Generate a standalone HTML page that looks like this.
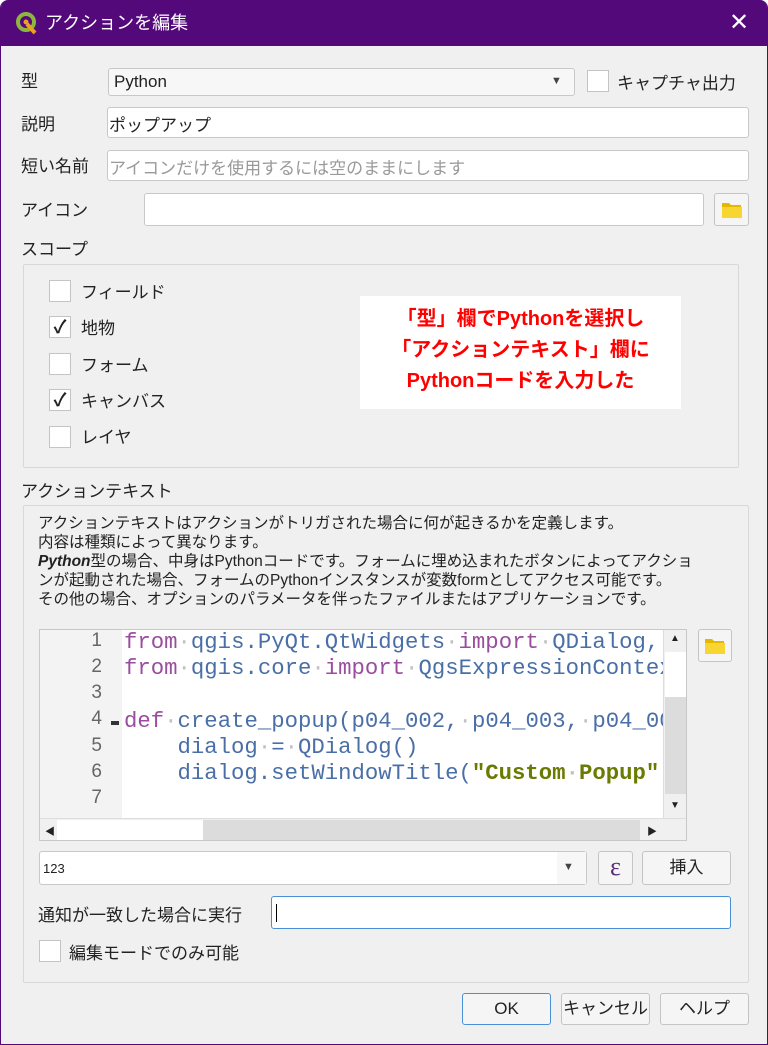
<!DOCTYPE html>
<html><head><meta charset="utf-8"><style>
*{box-sizing:border-box;margin:0;padding:0}
body{width:768px;height:1045px;background:#fff;font-family:"Liberation Sans","Noto Sans CJK JP",sans-serif;font-size:16px;color:#222;position:relative;overflow:hidden}
.win{position:absolute;left:0;top:0;width:768px;height:1045px;background:#f0f0f0;border:1px solid #54097a;border-top:none;border-radius:8px 8px 0 0;overflow:hidden}
.title{position:absolute;left:0;top:0;width:768px;height:46px;background:#54097a;color:#fff}
.a{position:absolute;white-space:nowrap}
.inp{position:absolute;background:#fff;border:1px solid #c8c8c8;border-radius:3px}
.btn{position:absolute;background:#f5f5f5;border:1px solid #c4c4c4;border-radius:3px;text-align:center}
.cb{position:absolute;width:22px;height:22px;background:#fff;border:1px solid #c4c4c4}
.grp{position:absolute;border:1px solid #d8d8d8;border-radius:2px}
.code{font-family:"Liberation Mono","DejaVu Sans Mono",monospace;font-size:22.3px;color:#4a6fa6}
.k{color:#9a4d9e}.s{color:#6b7a00;font-weight:bold}.d{color:#c0c0c0}
.ln{position:absolute;left:0;width:62px;text-align:right;color:#666;font-family:"Liberation Sans",sans-serif;font-size:19px}
</style></head><body><div class="win">
<div class="title">
<svg class="a" style="left:14px;top:11px" width="24" height="24" viewBox="0 0 24 24"><circle cx="11" cy="11" r="8" fill="none" stroke="#8db63e" stroke-width="4"/><path d="M12 13 L20 22" stroke="#e8a21c" stroke-width="4"/><circle cx="11" cy="11" r="2.5" fill="#e8a21c"/></svg>
<div class="a" style="left:44px;top:9px;font-size:18px">アクションを編集</div>
<div class="a" style="left:728px;top:8px;font-size:24px;font-weight:300">✕</div>
</div>

<div class="a" style="left:20px;top:67px;font-size:17px">型</div>
<div class="inp" style="left:107px;top:68px;width:467px;height:28px;background:#f7f7f7"><span class="a" style="left:5px;top:3px;font-size:17px">Python</span><span class="a" style="left:442px;top:6px;font-size:11px;color:#444">▼</span></div>
<div class="cb" style="left:586px;top:70px"></div>
<div class="a" style="left:616px;top:69px;font-size:17px">キャプチャ出力</div>

<div class="a" style="left:20px;top:110px;font-size:17px">説明</div>
<div class="inp" style="left:106px;top:107px;width:642px;height:31px"><span class="a" style="left:1px;top:3px;font-size:17px">ポップアップ</span></div>
<div class="a" style="left:20px;top:152px;font-size:17px">短い名前</div>
<div class="inp" style="left:106px;top:150px;width:642px;height:31px"><span class="a" style="left:1px;top:3px;color:#999;font-size:17px">アイコンだけを使用するには空のままにします</span></div>
<div class="a" style="left:20px;top:196px;font-size:17px">アイコン</div>
<div class="inp" style="left:143px;top:193px;width:560px;height:33px"></div>
<div class="btn" style="left:713px;top:193px;width:35px;height:33px"><svg style="margin-top:7px" width="22" height="18" viewBox="0 0 22 18"><path d="M1 2h7l2 2h10v13H1z" fill="#e5b800"/><path d="M1 6h20v11H1z" fill="#f8d531"/></svg></div>

<div class="a" style="left:20px;top:235px;font-size:17px">スコープ</div>
<div class="grp" style="left:22px;top:264px;width:716px;height:204px"></div>
<div class="cb" style="left:48px;top:280px"></div><div class="a" style="left:80px;top:278px;font-size:17px">フィールド</div>
<div class="cb" style="left:48px;top:316px;font-size:18px;font-weight:bold;text-align:center;line-height:20px">✓</div><div class="a" style="left:80px;top:314px;font-size:17px">地物</div>
<div class="cb" style="left:48px;top:353px"></div><div class="a" style="left:80px;top:351px;font-size:17px">フォーム</div>
<div class="cb" style="left:48px;top:389px;font-size:18px;font-weight:bold;text-align:center;line-height:20px">✓</div><div class="a" style="left:80px;top:387px;font-size:17px">キャンバス</div>
<div class="cb" style="left:48px;top:426px"></div><div class="a" style="left:80px;top:423px;font-size:17px">レイヤ</div>
<div class="a" style="left:359px;top:296px;width:321px;height:113px;background:#fff;color:#f00;font-weight:bold;font-size:20px;text-align:center;line-height:31px;padding-top:8px">「型」欄でPythonを選択し<br>「アクションテキスト」欄に<br>Pythonコードを入力した</div>

<div class="a" style="left:20px;top:477px;font-size:17px">アクションテキスト</div>
<div class="grp" style="left:22px;top:505px;width:726px;height:478px"></div>
<div class="a" style="left:37px;top:514px;font-size:15.5px;line-height:19px">アクションテキストはアクションがトリガされた場合に何が起きるかを定義します。<br>内容は種類によって異なります。<br><i><b>Python</b></i>型の場合、中身はPythonコードです。フォームに埋め込まれたボタンによってアクショ<br>ンが起動された場合、フォームのPythonインスタンスが変数formとしてアクセス可能です。<br>その他の場合、オプションのパラメータを伴ったファイルまたはアプリケーションです。</div>

<div class="a" style="left:38px;top:629px;width:648px;height:212px;border:1px solid #c8c8c8;background:#fff;overflow:hidden">
<div class="a" style="left:0;top:0;width:82px;height:188px;background:#f3f3f3"></div>
<div class="ln" style="top:0">1</div><div class="ln" style="top:26px">2</div><div class="ln" style="top:52px">3</div><div class="ln" style="top:78px">4</div><div class="ln" style="top:105px">5</div><div class="ln" style="top:131px">6</div><div class="ln" style="top:157px">7</div>
<div class="a" style="left:71px;top:91px;width:8px;height:4px;background:#333"></div>
<div class="a code" style="left:84px;top:-1px;line-height:26.3px;width:540px;overflow:hidden">
<span class="k">from</span><span class="d">·</span>qgis.PyQt.QtWidgets<span class="d">·</span><span class="k">import</span><span class="d">·</span>QDialog,<br>
<span class="k">from</span><span class="d">·</span>qgis.core<span class="d">·</span><span class="k">import</span><span class="d">·</span>QgsExpressionContext<br><br>
<span class="k">def</span><span class="d">·</span>create_popup(p04_002,<span class="d">·</span>p04_003,<span class="d">·</span>p04_004<br>
&nbsp;&nbsp;&nbsp;&nbsp;dialog<span class="d">·</span>=<span class="d">·</span>QDialog()<br>
&nbsp;&nbsp;&nbsp;&nbsp;dialog.setWindowTitle(<span class="s">"Custom<span class="d">·</span>Popup"</span>)</div>
<div class="a" style="left:623px;top:0;width:24px;height:188px;background:#f0f0f0;border-left:1px solid #ddd"><div class="a" style="left:1px;top:22px;width:21px;height:45px;background:#fff"></div><div class="a" style="left:1px;top:67px;width:21px;height:97px;background:#dcdcdc"></div><span class="a" style="left:6px;top:3px;font-size:10px">▲</span><span class="a" style="left:6px;top:170px;font-size:10px">▼</span></div>
<div class="a" style="left:0;top:188px;width:647px;height:23px;background:#f0f0f0;border-top:1px solid #ddd"><div class="a" style="left:17px;top:1px;width:146px;height:21px;background:#fff"></div><div class="a" style="left:163px;top:1px;width:437px;height:21px;background:#dcdcdc"></div><span class="a" style="left:5px;top:4px;font-size:10px">◀</span><span class="a" style="left:607px;top:4px;font-size:10px">▶</span></div>
</div>
<div class="btn" style="left:697px;top:629px;width:34px;height:33px"><svg style="margin-top:7px" width="22" height="18" viewBox="0 0 22 18"><path d="M1 2h7l2 2h10v13H1z" fill="#e5b800"/><path d="M1 6h20v11H1z" fill="#f8d531"/></svg></div>

<div class="inp" style="left:38px;top:851px;width:548px;height:34px"><span class="a" style="left:3px;top:9px;font-size:13px">123</span><div class="a" style="left:517px;top:0;width:29px;height:32px;background:#f7f7f7"></div><span class="a" style="left:523px;top:9px;font-size:11px;color:#444">▼</span></div>
<div class="btn" style="left:597px;top:851px;width:35px;height:34px;color:#5a2a78;font-size:26px;line-height:30px;font-family:'Liberation Serif',serif">ε</div>
<div class="btn" style="left:641px;top:851px;width:89px;height:34px;line-height:31px;font-size:17px">挿入</div>

<div class="a" style="left:37px;top:901px;font-size:17px">通知が一致した場合に実行</div>
<div class="inp" style="left:270px;top:896px;width:460px;height:33px;border-color:#4a90d9"><div class="a" style="left:4px;top:7px;width:1px;height:18px;background:#000"></div></div>
<div class="cb" style="left:38px;top:940px"></div><div class="a" style="left:68px;top:939px;font-size:17px">編集モードでのみ可能</div>

<div class="btn" style="left:461px;top:993px;width:89px;height:32px;line-height:29px;border-color:#4a90d9;font-size:17px">OK</div>
<div class="btn" style="left:560px;top:993px;width:89px;height:32px;line-height:29px;font-size:17px">キャンセル</div>
<div class="btn" style="left:659px;top:993px;width:89px;height:32px;line-height:29px;font-size:17px">ヘルプ</div>
</div></body></html>
